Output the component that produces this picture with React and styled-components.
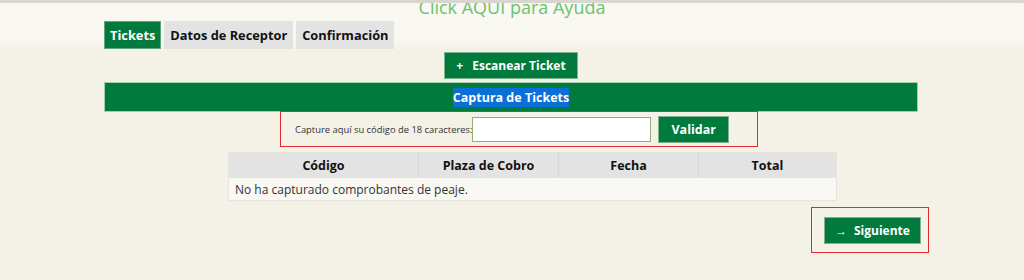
import React from 'react'
import styled, { createGlobalStyle } from 'styled-components'

const GlobalStyle = createGlobalStyle`
  html, body {
    margin: 0;
    padding: 0;
    background: #f4f1e6;
    font-family: "Open Sans", "Liberation Sans", sans-serif;
  }
`

const green = '#007a3d'

// Top band
const Top = styled.header`
  height: 49px;
  background: linear-gradient(#f9f8f3, #f8f7f2 80%, #f4f1e6);
  border-top: 3px solid #d8d6cf;
  box-sizing: border-box;
  position: relative;
  overflow: hidden;
`

const HelpLink = styled.a`
  display: block;
  text-align: center;
  color: #6cc36c;
  font-size: 18px;
  line-height: 20px;
  margin-top: -6px;
  text-decoration: none;
`

const Tabs = styled.nav`
  display: flex;
  gap: 3px;
  position: absolute;
  left: 104px;
  bottom: 0;
`

const Tab = styled.div`
  height: 28px;
  padding: 0 5px;
  display: flex;
  align-items: center;
  font-weight: 700;
  font-size: 12.8px;
  color: ${p => (p.$active ? '#fff' : '#111')};
  background: ${p => (p.$active ? green : '#e3e3e3')};
  border: 1px solid ${p => (p.$active ? '#5fa77a' : '#e3e3e3')};
  box-sizing: border-box;
`

const Main = styled.main`
  width: 814px;
  margin-left: 104px;
  display: flex;
  flex-direction: column;
`

const Button = styled.button`
  background: ${green};
  color: #fff;
  font-family: inherit;
  font-weight: 700;
  font-size: ${p => p.$size || '12px'};
  border: 1px solid #7fb48f;
  height: ${p => p.$h || '27px'};
  padding: 0 ${p => p.$px || '10px'};
  display: inline-flex;
  align-items: center;
  gap: ${p => p.$gap || '10px'};
  cursor: pointer;
  box-sizing: border-box;
`

const ScanRow = styled.div`
  display: flex;
  justify-content: center;
  margin-top: 3px;
`

const CaptureBar = styled.div`
  margin-top: 3px;
  height: 30px;
  background: ${green};
  border: 1px solid #a7cdb0;
  box-sizing: border-box;
  display: flex;
  align-items: center;
  justify-content: center;
  color: #fff;
  font-weight: 700;
  font-size: 12.5px;
`

const Selected = styled.span`
  background: #0a6fd6;
  padding: 1px 0;
`

const RedBox = styled.div`
  margin: -1px 0 0 176px;
  width: 478px;
  height: 36px;
  border: 1.5px solid #e22a2a;
  box-sizing: border-box;
  display: flex;
  align-items: center;
  padding-left: 14px;
`

const Label = styled.label`
  font-size: 9.4px;
  color: #333;
`

const Input = styled.input`
  width: 179px;
  height: 25px;
  box-sizing: border-box;
  border: 1px solid #8fb07a;
  background: #fff;
  margin: 1px 7px 0 0;
  outline: none;
`

const Table = styled.table`
  margin: 5px 0 0 124px;
  width: 609px;
  table-layout: fixed;
  border-collapse: collapse;
  font-size: 12px;
  border: 1px solid #e6e4dc;
`

const Th = styled.th`
  background: #e3e3e3;
  height: 25px;
  padding: 0;
  font-weight: 700;
  font-size: 12.5px;
  color: #111;
  border-right: 1px solid #d6d6d6;
  width: ${p => p.$w};
  &:last-child { border-right: none; }
`

const Td = styled.td`
  background: #f9f8f3;
  height: 22px;
  padding: 0 0 0 6px;
  color: #333;
`

const NextBox = styled.div`
  margin: 6px 0 0 707px;
  width: 118px;
  height: 46px;
  border: 1.5px solid #e22a2a;
  box-sizing: border-box;
  display: flex;
  align-items: center;
  padding-left: 12px;
`

const App = () => (
  <>
    <GlobalStyle />
    <Top>
      <HelpLink href="#">Click AQUI para Ayuda</HelpLink>
      <Tabs>
        <Tab $active>Tickets</Tab>
        <Tab>Datos de Receptor</Tab>
        <Tab>Confirmación</Tab>
      </Tabs>
    </Top>
    <Main>
      <ScanRow>
        <Button $px="11px" $gap="9px">
          <span>+</span>
          <span>Escanear Ticket</span>
        </Button>
      </ScanRow>
      <CaptureBar>
        <Selected>Captura de Tickets</Selected>
      </CaptureBar>
      <RedBox>
        <Label>Capture aquí su código de 18 caracteres:</Label>
        <Input type="text" />
        <Button $h="27px" $px="12px" $size="12.5px">Validar</Button>
      </RedBox>
      <Table>
        <thead>
          <tr>
            <Th $w="189px">Código</Th>
            <Th $w="139px">Plaza de Cobro</Th>
            <Th $w="139px">Fecha</Th>
            <Th>Total</Th>
          </tr>
        </thead>
        <tbody>
          <tr>
            <Td colSpan={4}>No ha capturado comprobantes de peaje.</Td>
          </tr>
        </tbody>
      </Table>
      <NextBox>
        <Button $px="10px" $gap="7px">
          <span>→</span>
          <span>Siguiente</span>
        </Button>
      </NextBox>
    </Main>
  </>
)

export default App
